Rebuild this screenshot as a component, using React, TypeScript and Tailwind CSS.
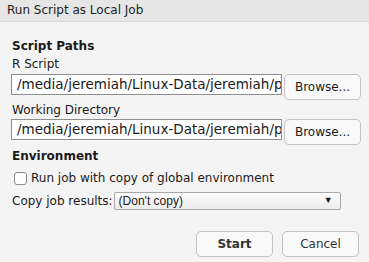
import React from "react";

const font = { fontFamily: '"DejaVu Sans", "Noto Sans", sans-serif' };

function PathRow({ value }: { value: string }) {
  return (
    <div className="flex items-start">
      <div className="ml-[11px] w-[271px] h-[21px] border border-[#8e8e8e] bg-white overflow-hidden whitespace-nowrap pl-[5px] text-[13.5px] leading-[19px] text-[#1a1a1a]">
        {value}
      </div>
      <button className="ml-[2px] w-[77px] h-[26px] rounded-[5px] border border-[#c4c4c4] bg-[#f9f9f9] text-[12px] text-[#1a1a1a]">
        Browse...
      </button>
    </div>
  );
}

export default function App() {
  return (
    <div style={font} className="w-[369px] h-[262px] bg-[#f4f4f4] flex flex-col text-[#1a1a1a]">
      <div className="h-[22px] bg-[#e6e6e6] border-b border-[#d6d6d6] pl-[7px] text-[12px] leading-[21px] text-[#222]">
        Run Script as Local Job
      </div>
      <div className="flex flex-col">
        <div className="mt-[16px] ml-[12px] font-bold text-[12px] leading-[17px]">Script Paths</div>
        <div className="mt-[1px] ml-[12px] text-[12px] leading-[17px]">R Script</div>
        <div className="mt-[1px]">
          <PathRow value="/media/jeremiah/Linux-Data/jeremiah/projects/script.R" />
        </div>
        <div className="mt-[2px] ml-[12px] text-[12px] leading-[17px]">Working Directory</div>
        <PathRow value="/media/jeremiah/Linux-Data/jeremiah/projects" />
        <div className="mt-[2px] ml-[12px] font-bold text-[12px] leading-[18px]">Environment</div>
        <div className="mt-[6px] ml-[14px] flex items-center">
          <div className="w-[13px] h-[13px] rounded-[3px] border border-[#8a8a8a] bg-white" />
          <span className="ml-[4px] text-[12px] leading-[15px]">Run job with copy of global environment</span>
        </div>
        <div className="mt-[6px] ml-[12px] flex items-center">
          <span className="text-[12px] leading-[17px]">Copy job results:</span>
          <div
            className="ml-[1px] w-[227px] h-[18px] border border-[#a8a8a8] rounded-[2px] bg-gradient-to-b from-[#fdfdfd] to-[#ececec] flex items-center justify-between pl-[4px] pr-[7px] text-[12px]"
            style={{ fontFamily: '"Liberation Sans", Arial, sans-serif' }}
          >
            <span>(Don't copy)</span>
            <span className="text-[9px]">▼</span>
          </div>
        </div>
        <div className="mt-[21px] flex justify-end pr-[10px] gap-[9px]">
          <button className="w-[77px] h-[26px] rounded-[5px] border border-[#c4c4c4] bg-[#f9f9f9] text-[12px] font-bold text-[#333]">
            Start
          </button>
          <button className="w-[77px] h-[26px] rounded-[5px] border border-[#c4c4c4] bg-[#f9f9f9] text-[12px] text-[#333]">
            Cancel
          </button>
        </div>
      </div>
    </div>
  );
}
